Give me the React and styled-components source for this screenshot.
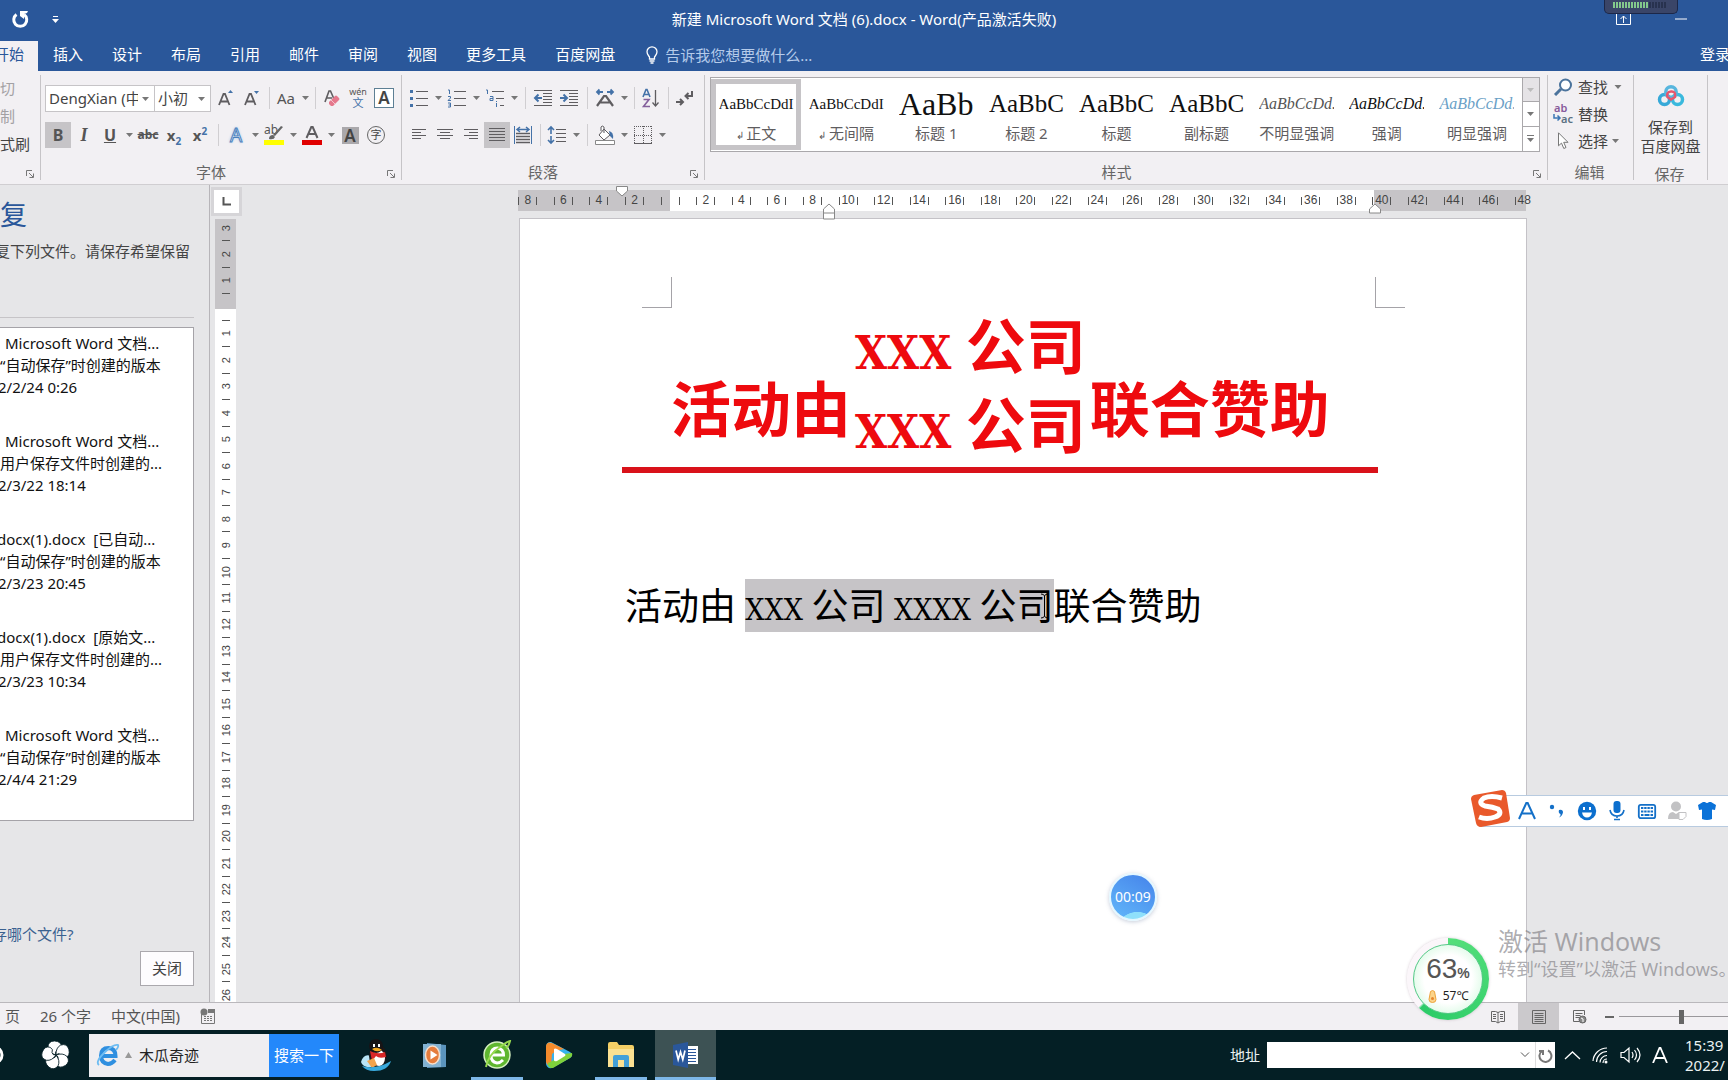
import React, { useState } from 'react';
import styled, { createGlobalStyle, css } from 'styled-components';

const GlobalStyle = createGlobalStyle`
  * {
    box-sizing: border-box;
  }
  body {
    margin: 0;
    overflow: hidden;
    font-family: 'Noto Sans', 'Noto Sans CJK SC', sans-serif;
    font-size: 15px;
    line-height: 22px;
    color: #444;
  }
  button, input, select {
    margin: 0;
    padding: 0;
    border: 0;
    background: none;
    color: inherit;
    font: inherit;
  }
  h1, h2, p, ul {
    margin: 0;
    padding: 0;
    font-weight: 400;
    list-style: none;
  }
  svg {
    display: block;
    flex: none;
  }
`;

const blue = '#2a579a';
const ribbonGray = '#f2f0f3';
const bodyGray = '#e6e6e8';
const markGray = '#c6c4c7';
const iconGray = '#5f5d60';
const iconBlue = '#4472a8';

/* ---------- shell ---------- */

const Shell = styled.div`
  position: relative;
  display: flex;
  flex-direction: column;
  width: 100%;
  height: 100vh;
  overflow: hidden;
  background: ${bodyGray};
`;

const Header = styled.header`
  flex: none;
  background: ${blue};
  color: #fff;
`;

const TitleBar = styled.div`
  display: grid;
  grid-template-columns: 1fr auto 1fr;
  align-items: center;
  height: 41px;
  padding: 0 11px 3px;
`;

const TitleTools = styled.div`
  display: flex;
  align-items: center;
  justify-content: ${({ $end }) => ($end ? 'flex-end' : 'flex-start')};
  gap: ${({ $end }) => ($end ? '44px' : '23px')};
  padding-right: ${({ $end }) => ($end ? '30px' : '0')};
`;

const PlainButton = styled.button`
  display: flex;
  align-items: center;
  justify-content: center;
`;

const Title = styled.h1`
  font-size: 15px;
`;

const Tabs = styled.nav`
  display: flex;
  height: 30px;
`;

const Tab = styled.button`
  height: 30px;
  padding: 0 14px 4px 15px;
  white-space: nowrap;
  color: #fff;
  ${({ $active }) =>
    $active &&
    css`
      display: flex;
      align-items: center;
      justify-content: flex-end;
      width: 38px;
      overflow: hidden;
      background: ${ribbonGray};
      color: ${blue};
    `}
`;

const TellMe = styled.label`
  display: flex;
  flex: 1;
  align-items: center;
  gap: 7px;
  padding: 0 0 2px 17px;

  input {
    width: 200px;
    height: 24px;
    color: #fff;
  }
  input::placeholder {
    color: #b5cbea;
    opacity: 1;
  }
`;

const SignIn = styled.a`
  width: 28px;
  overflow: hidden;
  padding-top: 2px;
  color: #fff;
  text-decoration: none;
  white-space: nowrap;
`;

const LevelWidget = styled.div`
  position: absolute;
  top: 0;
  right: 50px;
  display: flex;
  align-items: center;
  gap: 1px;
  width: 74px;
  height: 14px;
  padding: 0 8px 3px;
  border: 1px solid #1c2748;
  border-top: 0;
  border-radius: 0 0 5px 5px;
  background: #3a4568;
`;

const LevelBar = styled.i`
  width: 2px;
  height: 6px;
  background: ${({ $on }) => ($on ? '#83c98c' : '#28324f')};
`;

/* ---------- ribbon ---------- */

const Ribbon = styled.section`
  display: flex;
  flex: none;
  height: 114px;
  padding: 4px 0;
  border-bottom: 1px solid #d0ced1;
  background: ${ribbonGray};
`;

const Group = styled.div`
  display: flex;
  flex: none;
  flex-direction: column;
  gap: 11px;
  width: ${({ $w }) => $w}px;
  padding: 10px 0 0 4px;
  border-right: 1px solid ${markGray};
`;

const GroupFooter = styled.div`
  display: flex;
  align-items: center;
  height: 14px;
  margin: auto 0 1px;
  padding-right: 6px;
  line-height: 14px;
  color: #666;

  span {
    flex: 1;
    text-align: center;
  }
  button {
    width: 18px;
    margin-left: auto;
    padding: 4px 0 0 10px;
  }
`;

const ToolRow = styled.div`
  display: flex;
  align-items: center;
  height: 26px;
`;

const ToolButton = styled.button`
  display: flex;
  flex: none;
  align-items: center;
  height: 26px;
  background: ${({ $active }) => ($active ? markGray : 'none')};
`;

const IconSlot = styled.span`
  display: flex;
  align-items: center;
  justify-content: center;
  width: 26px;
  height: 26px;
`;

const ArrowSlot = styled.span`
  display: flex;
  justify-content: center;
  width: 12px;
`;

const Divider = styled.i`
  display: flex;
  justify-content: center;
  width: ${({ $w = 8 }) => $w}px;
  height: 22px;

  &::before {
    content: '';
    width: 1px;
    background: #d0ced1;
  }
`;

const Combo = styled.label`
  position: relative;
  width: ${({ $w }) => $w}px;
  height: 27px;
  margin-right: ${({ $last }) => ($last ? '2px' : '0')};
  border: 1px solid ${markGray};
  border-left-width: ${({ $last }) => ($last ? '0' : '1px')};
  background: #fff;

  select {
    width: 100%;
    height: 25px;
    padding: 0 16px 0 3px;
    appearance: none;
  }
  svg {
    position: absolute;
    top: 11px;
    right: 5px;
  }
`;

const Glyph = styled.b`
  font-family: ${({ $serif }) =>
    $serif ? "'Liberation Serif', serif" : "'Noto Sans', sans-serif"};
  font-size: ${({ $size = 16 }) => $size}px;
  font-style: ${({ $italic }) => ($italic ? 'italic' : 'normal')};
  font-weight: ${({ $light }) => ($light ? 400 : 700)};
  line-height: 18px;
  text-decoration: ${({ $line = 'none' }) => $line};
  color: #555;

  sub, sup {
    font-size: 10px;
    line-height: 0;
    color: ${iconBlue};
  }
`;

const ClipItem = styled.button`
  display: block;
  height: 18px;
  text-align: left;
  line-height: 18px;
  color: ${({ $off }) => ($off ? '#a3a1a4' : '#444')};
`;

const ClipGroup = styled(Group)`
  gap: 10px;
  padding: 4px 0 0;
`;

/* ---------- styles gallery ---------- */

const StylesGroup = styled(Group)`
  padding: 2px 0 0 5px;
`;

const Gallery = styled.div`
  display: flex;
  width: 830px;
  height: 75px;
  border: 1px solid #aaa8ab;
  background: #fff;
`;

const StyleItem = styled.button`
  display: flex;
  flex: 1;
  flex-direction: column;
  align-items: center;
  justify-content: space-between;
  height: 71px;
  margin-top: 1px;
  padding: 3px 2px 2px;
  border: 5px solid ${({ $active }) => ($active ? markGray : 'transparent')};
  white-space: nowrap;
  line-height: 20px;
  color: #5f5d60;
`;

const StyleName = styled.span`
  height: 20px;

  small {
    font-size: 10px;
    line-height: 1;
  }
`;

const Preview = styled.span`
  width: 75px;
  height: 36px;
  overflow: hidden;
  text-align: left;
  font-family: 'Liberation Serif', serif;
  font-size: ${({ $size = 15 }) => $size}px;
  font-style: ${({ $italic }) => ($italic ? 'italic' : 'normal')};
  line-height: 34px;
  color: ${({ $color = '#111' }) => $color};
`;

const GalleryScroll = styled.div`
  display: grid;
  grid-template-rows: repeat(3, 1fr);
  width: 17px;
  border-left: 1px solid #aaa8ab;

  button {
    display: flex;
    align-items: center;
    justify-content: center;
    border-bottom: 1px solid #aaa8ab;
  }
  button:first-child {
    background: #e5e3e6;
  }
  button:last-child {
    border-bottom: 0;
  }
`;

const EditItem = styled.button`
  display: flex;
  align-items: center;
  gap: 4px;
  height: 18px;
  line-height: 18px;

  svg:first-child {
    width: 22px;
  }
`;

const EditGroup = styled(Group)`
  gap: 9px;
  padding: 3px 0 0 4px;
`;

const SaveButton = styled.button`
  display: flex;
  flex-direction: column;
  align-items: center;
  gap: 11px;
  margin-right: 4px;
  line-height: 19px;
`;

/* ---------- recovery pane ---------- */

const Body = styled.main`
  display: flex;
  flex: 1;
  min-height: 0;
`;

const Pane = styled.aside`
  display: flex;
  flex: none;
  flex-direction: column;
  width: 210px;
  padding: 14px 15px 16px 0;
  overflow: hidden;
  border-right: 1px solid #b7b5b9;
  white-space: nowrap;
`;

const PaneTitle = styled.h2`
  font-size: 27px;
  line-height: 32px;
  color: ${blue};
`;

const PaneText = styled.p`
  padding: 9px 0 55px;
  border-bottom: 1px solid ${markGray};
  text-indent: -5px;
`;

const FileList = styled.ul`
  height: 494px;
  margin-top: 9px;
  padding-top: 4px;
  overflow: hidden;
  border: 1px solid #a5a3a8;
  border-left: 0;
  background: #fff;
  color: #111;
`;

const FileItem = styled.li`
  height: 98px;

  p {
    white-space: pre;
  }
  p:first-child {
    text-indent: ${({ $cut }) => ($cut ? '-3px' : '5px')};
  }
  p:last-child {
    text-indent: -2px;
  }
`;

const HelpLink = styled.a`
  margin-top: auto;
  text-indent: -8px;
  text-decoration: none;
  color: #3a6190;
`;

const CloseButton = styled.button`
  align-self: flex-end;
  width: 54px;
  height: 35px;
  margin-top: 6px;
  padding-bottom: 2px;
  border: 1px solid #aaa8ad;
  background: #fdfcfe;
`;

/* ---------- rulers ---------- */

const SideRuler = styled.div`
  display: flex;
  flex: none;
  flex-direction: column;
  width: 33px;
  padding: 2px 0 0 1px;
  overflow: hidden;
`;

const TabSelector = styled.button`
  display: flex;
  flex: none;
  align-items: center;
  justify-content: center;
  width: 31px;
  height: 29px;
  border: 3px solid #d6d5d8;
  background: #fff;
`;

const VTrack = styled.div`
  display: grid;
  flex: none;
  grid-template-rows: repeat(30, 1fr);
  width: 21px;
  height: 796px;
  margin: 3px 0 0 4px;
  padding-top: 2px;
  background: linear-gradient(${markGray} 90px, #fff 90px);
`;

const VCell = styled.div`
  display: grid;
  grid-template-rows: 1fr 1fr;
  align-items: center;
  justify-items: center;
  font-family: 'Liberation Sans', sans-serif;
  font-size: 11px;
  line-height: 12px;

  span {
    writing-mode: vertical-rl;
    transform: rotate(180deg);
  }
  i {
    width: 8px;
    height: 1px;
    background: #555;
  }
`;

const Canvas = styled.div`
  display: flex;
  flex: 1;
  flex-direction: column;
  min-width: 0;
  padding: 5px 0 0 275px;
`;

const HTrack = styled.div`
  position: relative;
  flex: none;
  width: 1008px;
  height: 21px;
  background: linear-gradient(
    90deg,
    ${markGray} 152px,
    #fff 152px,
    #fff 856px,
    ${markGray} 856px
  );
`;

const HCells = styled.div`
  display: grid;
  grid-template-columns: repeat(29, 1fr);
  height: 21px;
  margin: 0 -16px 0 -8px;
`;

const HCell = styled.div`
  display: flex;
  align-items: center;
  justify-content: center;
  font-family: 'Liberation Sans', sans-serif;
  font-size: 12px;
  line-height: 21px;

  span {
    display: flex;
    justify-content: center;
    width: 17px;
  }
  &::before,
  &::after {
    content: '';
    width: 1px;
    height: 8px;
    background: #555;
  }
  &:last-child::after {
    background: none;
  }
`;

const Marker = styled.svg`
  position: absolute;
  top: ${({ $top }) => $top}px;
  left: ${({ $left }) => $left}px;
`;

/* ---------- document ---------- */

const Page = styled.article`
  flex: 1;
  width: 1008px;
  min-height: 0;
  margin: 7px 0 0 1px;
  overflow: hidden;
  border: 1px solid #c4c2c7;
  border-bottom: 0;
  background: #fff;
  color: #000;
`;

const Corners = styled.div`
  display: flex;
  justify-content: space-between;
  margin: 58px 121px 0 122px;
`;

const Corner = styled.i`
  width: 30px;
  height: 31px;
  border: solid #a5a3a8;
  border-width: ${({ $right }) => ($right ? '0 0 1px 1px' : '0 1px 1px 0')};
`;

const RedHead = styled.h2`
  display: flex;
  align-items: center;
  gap: 4px;
  margin: -5px 0 0 151px;
  font-family: 'Noto Sans CJK SC', sans-serif;
  font-size: 60px;
  font-weight: 700;
  line-height: 79px;
  white-space: nowrap;
  color: #ee0a0e;
`;

const Side = styled.span`
  padding-top: 46px;
`;

const Pair = styled.span`
  display: flex;
  flex-direction: column;
`;

const Latin = styled.span`
  font-family: 'DejaVu Serif Condensed', 'Liberation Serif', serif;
  font-size: ${({ $size }) => $size}px;
  line-height: 1;
`;

const RedRule = styled.hr`
  height: 6px;
  margin: 6px 148px 0 102px;
  border: 0;
  background: #d9121a;
`;

const Line = styled.p`
  display: flex;
  align-items: flex-start;
  margin: 106px 0 0 105px;
  font-family: 'Liberation Serif', 'Noto Sans CJK SC', serif;
  font-size: 37px;
  line-height: 57px;
  white-space: pre;
`;

const Selection = styled.span`
  position: relative;
  height: 53px;
  background: ${markGray};

  svg {
    position: absolute;
    top: 14px;
    right: 5px;
  }
`;

/* ---------- status bar ---------- */

const StatusBar = styled.footer`
  display: flex;
  flex: none;
  align-items: center;
  height: 28px;
  border-top: 1px solid #bab8bc;
  background: ${ribbonGray};
  color: #555;
`;

const StatusTexts = styled.div`
  display: flex;
  flex: 1;
  align-items: center;
  gap: 20px;
  padding: 0 0 2px 5px;
`;

const StatusIcon = styled.button`
  display: flex;
  align-items: center;
  justify-content: center;
  width: 41px;
  height: 27px;
  background: ${({ $active }) => ($active ? '#cbc9cc' : 'none')};
`;

const ZoomSlider = styled.input`
  width: 109px;
  height: 14px;
  margin-left: 5px;
  appearance: none;
  background: linear-gradient(#9a989c, #9a989c) center / 100% 1px no-repeat;

  &::-webkit-slider-thumb {
    width: 5px;
    height: 14px;
    appearance: none;
    background: #666;
  }
`;

/* ---------- taskbar ---------- */

const Taskbar = styled.nav`
  display: flex;
  flex: none;
  align-items: center;
  height: 50px;
  background: #041f25;
  color: #eaf2f2;
`;

const StartButton = styled.button`
  width: 30px;
  height: 50px;
`;

const TaskSearch = styled.div`
  display: flex;
  align-items: center;
  width: 250px;
  height: 43px;
  margin-right: 10px;
  padding-left: 7px;
  background: #efeef1;
  color: #222;

  input {
    flex: 1;
    min-width: 0;
    margin-left: 7px;
  }
`;

const SearchButton = styled.button`
  width: 70px;
  height: 43px;
  background: #2388fb;
  color: #fff;
`;

const TaskItem = styled.button`
  display: flex;
  align-items: center;
  justify-content: center;
  width: ${({ $wide }) => ($wide ? 61 : 52)}px;
  height: 50px;
  margin-right: ${({ $gap = 10 }) => $gap}px;
  border-top: 3px solid transparent;
  border-bottom: 3px solid ${({ $open }) => ($open ? '#7db7e8' : 'transparent')};
  background: ${({ $active }) => ($active ? '#3d5254' : 'none')};
`;

const Address = styled.label`
  display: flex;
  align-items: center;
  gap: 7px;
  margin-left: auto;
`;

const AddressBox = styled.span`
  display: flex;
  align-items: center;
  width: 288px;
  height: 26px;
  background: #fff;
  color: #444;

  input {
    flex: 1;
    min-width: 0;
  }
`;

const AddressButton = styled.button`
  display: flex;
  align-items: center;
  justify-content: center;
  width: 20px;
  height: 26px;
  border-left: ${({ $line }) => ($line ? '1px solid #ddd' : '0')};
`;

const Tray = styled.div`
  display: flex;
  align-items: center;
  gap: 11px;
  margin: 0 17px 0 9px;
`;

const Clock = styled.time`
  width: 43px;
  overflow: hidden;
  white-space: nowrap;
  line-height: 20px;
`;

/* ---------- floating things ---------- */

const SogouBar = styled.div`
  position: absolute;
  right: 0;
  bottom: 253px;
  display: flex;
  align-items: center;
  width: 249px;
  height: 32px;
  padding-left: 32px;
  border: 1px solid #b8cbe0;
  border-right: 0;
  background: #fff;

  > svg:first-child {
    position: absolute;
    left: -10px;
    bottom: -1px;
  }
  button {
    display: flex;
    justify-content: center;
    width: 30px;
  }
`;

const Watermark = styled.div`
  position: absolute;
  right: 0;
  bottom: 97px;
  width: 230px;
  font-size: 18px;
  line-height: 28px;
  white-space: nowrap;
  color: rgba(120, 118, 124, 0.6);

  strong {
    display: block;
    font-size: 25px;
    font-weight: 400;
  }
`;

const Timer = styled.div`
  position: absolute;
  right: 571px;
  bottom: 159px;
  display: flex;
  align-items: center;
  justify-content: center;
  width: 48px;
  height: 48px;
  border: 2px solid #e4f7ff;
  border-radius: 50%;
  background: radial-gradient(circle at 60% 135%, #8fe0fb 34%, transparent 35%),
    linear-gradient(210deg, #4583ea, #62b8fa);
  box-shadow: 0 1px 4px rgba(90, 110, 150, 0.35);
  font-size: 14px;
  color: #fff;
`;

const Gauge = styled.div`
  position: absolute;
  right: 239px;
  bottom: 60px;
  width: 82px;
  height: 82px;
  padding: 6px;
  border-radius: 50%;
  background: conic-gradient(#55df7b, #2bcb67 62%, #fbf6fa 63%);
  box-shadow: 0 0 3px rgba(120, 80, 110, 0.3);
`;

const GaugeFace = styled.div`
  display: flex;
  flex-direction: column;
  align-items: center;
  height: 70px;
  padding-top: 11px;
  border: 1px solid #55c987;
  border-radius: 50%;
  background: radial-gradient(#fff 50%, #c2f7d2);
  font-size: 12px;
  line-height: 18px;
  color: #222;

  b {
    font-family: 'Liberation Sans', sans-serif;
    font-size: 28px;
    font-weight: 400;
    line-height: 26px;
    color: #555;
  }
  small {
    font-size: 14px;
    font-weight: 700;
  }
  span {
    display: flex;
    align-items: center;
    gap: 6px;
    margin-top: 1px;
  }
`;

/* ---------- icons ---------- */

const Arrow = ({ color = '#777' }) => (
  <svg width="7" height="4" viewBox="0 0 7 4">
    <path d="M0 0h7L3.5 4z" fill={color} />
  </svg>
);

const Icon = ({ w = 20, h = 20, children, ...rest }) => (
  <svg width={w} height={h} viewBox={`0 0 ${w} ${h}`} fill="none" {...rest}>
    {children}
  </svg>
);

const Launcher = () => (
  <PlainButton aria-label="更多选项">
    <Icon w={8} h={8} stroke="#777">
      <path d="M.5 6V.5H6M3 3l4 4M7.500 3.500v4h-4" />
    </Icon>
  </PlainButton>
);

const UndoIcon = () => (
  <Icon w={18} h={18}>
    <path d="M5.500 4.500A6.500 6.500 0 1 0 13 4.500" stroke="#fff" strokeWidth="3" />
    <path d="M9 1h8l-1 2-3 1v5L9 6z" fill="#fff" />
  </Icon>
);

const MoreIcon = () => (
  <Icon w={7} h={7}>
    <path d="M1 .5h5" stroke="#fff" />
    <path d="M0 3h7L3.500 7z" fill="#fff" />
  </Icon>
);

const RibbonIcon = () => (
  <Icon w={15} h={12} stroke="#fff">
    <path d="M.5.5h14v11H.5zM7.500 10V3M4.500 6l3-3 3 3" />
  </Icon>
);

const BulbIcon = () => (
  <Icon w={12} h={18} stroke="#fff" strokeWidth="1.300">
    <path d="M3.500 13v-2C2.500 9.500 1 8.500 1 5.800a5 5 0 0 1 10 0c0 2.700-1.500 3.700-2.500 5.200v2zM3.500 15h5M4.500 17h3" />
  </Icon>
);

const GrowIcon = ({ down }) => (
  <Icon>
    <path d="M3 17 7.500 6h1.500L13.500 17M5 13.500h6.500" stroke={iconGray} strokeWidth="1.800" />
    <path d={down ? 'M12 3h5l-2.500 3z' : 'M12 5h5l-2.500-3z'} fill={iconBlue} />
  </Icon>
);

const EraserIcon = () => (
  <Icon>
    <path d="M3 14 7 3h1.500L12 11M5 10h5" stroke={iconGray} strokeWidth="1.600" />
    <path d="m7 14 6-6q1-1 2 0l2 2q1 1 0 2l-6 6H9l-2-2z" fill="#e5788c" />
    <path d="m9 12 4 4" stroke="#f6c3cc" />
  </Icon>
);

const Phonetic = styled.span`
  display: flex;
  flex-direction: column;
  align-items: center;
  font-size: 9px;
  line-height: 9px;
  color: #555;

  b {
    font-size: 11px;
    font-weight: 400;
    line-height: 13px;
    color: ${iconBlue};
  }
`;

const BoxedA = styled.span`
  width: 20px;
  height: 20px;
  border: 1px solid #5d7f94;
  background: #fff;
  font-size: 17px;
  font-weight: 600;
  line-height: 18px;
`;

const ShadedA = styled.span`
  width: 17px;
  height: 17px;
  background: #aaa8ab;
  font-size: 17px;
  font-weight: 600;
  line-height: 17px;
`;

const CircledChar = styled.span`
  width: 18px;
  height: 18px;
  border: 1px solid #666;
  border-radius: 50%;
  font-size: 11px;
  line-height: 16px;
`;

const GlowA = styled.span`
  font-size: 19px;
  line-height: 20px;
  color: #fff;
  -webkit-text-stroke: 1px #4a80bd;
  text-shadow: 0 0 3px #85b3e4;
`;

const HighlightIcon = () => (
  <Icon w={20} h={22}>
    <text x="0" y="10" fontSize="12" fill="#555">ab</text>
    <path d="m19 3-8 9-2-1 8-9zM5 15q0-4 4-4l2 2q-1 3-6 2z" fill="#666" />
    <path d="M0 16h20v5H0z" fill="#ff0" />
  </Icon>
);

const FontColorIcon = () => (
  <Icon w={20} h={22}>
    <path d="M4.500 14 9.300 3h1.400l4.800 11M6.500 10h7" stroke={iconGray} strokeWidth="2" />
    <path d="M0 16h20v5H0z" fill="#e00000" />
  </Icon>
);

const BulletsIcon = () => (
  <Icon>
    <path d="M7 3.500h12M7 10.500h12M7 17.500h12" stroke={iconGray} />
    <path d="M1 2h3v3H1zM1 9h3v3H1zM1 16h3v3H1z" fill={iconBlue} />
  </Icon>
);

const NumbersIcon = () => (
  <Icon>
    <path d="M7 3.500h12M7 10.500h12M7 17.500h12" stroke={iconGray} />
    <path
      d="M1 2h1.500v4M1 8.500h2.500V10L1 12.500h3M1 15h2.500v4H1M1.500 17h2"
      stroke={iconBlue}
    />
  </Icon>
);

const MultiIcon = () => (
  <Icon>
    <path d="M7 3.500h12M11 10.500h8M15 17.500h4" stroke={iconGray} />
    <path
      d="M1 2h1.500v4M5 8.500h3v4H5v-2h3M11.500 15v4M11.500 13v1"
      stroke={iconBlue}
    />
  </Icon>
);

const IndentIcon = ({ right }) => (
  <Icon>
    <path d="M1 2.500h18M10 5.500h9M10 8.500h9M10 11.500h9M10 14.500h9M1 17.500h18" stroke={iconGray} />
    <path
      d={right ? 'M1 10h7M4.500 6.500 8 10l-3.500 3.500' : 'M9 10H2M5.500 6.500 2 10l3.500 3.500'}
      stroke={iconBlue}
      strokeWidth="2"
    />
  </Icon>
);

const CharScaleIcon = () => (
  <Icon>
    <path d="M2 18 9 8h2l7 10M5 14.500h10" stroke={iconGray} strokeWidth="2.200" />
    <path d="M8 4H2M4.500 1.500 2 4l2.500 2.500M12 4h6M15.500 1.500 18 4l-2.500 2.500" stroke={iconBlue} strokeWidth="1.800" />
  </Icon>
);

const SortIcon = () => (
  <Icon>
    <path d="m2 9 3-7.500h1L9 9M3 6.500h5" stroke={iconBlue} strokeWidth="1.600" />
    <path d="M2.500 11.500H8l-5.500 7H9" stroke="#85609c" strokeWidth="1.600" />
    <path d="M14.500 2v16M11.500 14.500l3 3.500 3-3.500" stroke={iconGray} strokeWidth="1.300" />
  </Icon>
);

const MarksIcon = () => (
  <Icon>
    <path d="M17 3v5h-6M13.500 5 10.500 8l3 3M1 14h7M5 11l3 3-3 3" stroke={iconGray} strokeWidth="2" />
  </Icon>
);

const AlignIcon = ({ type }) => {
  const paths = {
    left: 'M3 4.500h14M3 7.500h9M3 10.500h14M3 13.500h9',
    center: 'M2 4.500h16M5 7.500h10M2 10.500h16M5 13.500h10',
    right: 'M3 4.500h14M8 7.500h9M3 10.500h14M8 13.500h9',
    justify: 'M2 3.500h16M2 6.500h16M2 9.500h16M2 12.500h16M2 15.500h16',
  };
  return (
    <Icon stroke={iconGray}>
      <path d={paths[type]} />
    </Icon>
  );
};

const DistributeIcon = () => (
  <Icon>
    <path d="M3 8.500h14M3 11.500h14M3 14.500h14M3 17.500h14" stroke={iconGray} strokeWidth="1.500" />
    <path d="M1.500 1v18M18.500 1v18" stroke={iconBlue} />
    <path d="M5 4.500h10M7 2 4 4.500 7 7M13 2l3 2.500L13 7" stroke={iconBlue} strokeWidth="1.500" />
  </Icon>
);

const LineSpaceIcon = () => (
  <Icon>
    <path d="M9 4.500h10M9 8.500h10M9 12.500h10M9 16.500h10" stroke={iconGray} />
    <path d="M4 2v7M1 5l3-3 3 3M4 11v7M1 15l3 3 3-3" stroke={iconBlue} strokeWidth="1.600" />
  </Icon>
);

const FillIcon = () => (
  <Icon>
    <path d="m9 4 6 6-6 5-5-5zM9 8V2q-2-2-3 0v4" stroke={iconGray} fill="#fff" />
    <path d="M14 6q5 1 4 8l-3-3z" fill={iconBlue} />
    <path d="M.5 15.500h19v4H.5z" fill="#fff" stroke="#888" />
  </Icon>
);

const BordersIcon = () => (
  <Icon stroke={iconGray} strokeDasharray="1 1">
    <path d="M1 1.500h18M1 10.500h18M1.500 1v18M10.500 1v18M18.500 1v18" />
    <path d="M1 18.500h18" strokeDasharray="none" />
  </Icon>
);

const FindIcon = () => (
  <Icon w={22} h={18} stroke="#4b739c">
    <circle cx="13.500" cy="7" r="5.500" fill="#fff" strokeWidth="2" />
    <path d="m9 11-6 6" strokeWidth="3" />
  </Icon>
);

const ReplaceIcon = () => (
  <svg width="22" height="20" viewBox="0 0 22 20">
    <text x="2" y="8" fontSize="11" fontWeight="600" fill="#875a9b">ab</text>
    <text x="9" y="19" fontSize="11" fontWeight="600" fill="#5b7183">ac</text>
    <path d="M2 10v4h6M5.500 11.500 8 14l-2.500 2.500" fill="none" stroke="#3c76b4" strokeWidth="1.500" />
  </svg>
);

const SelectIcon = () => (
  <Icon w={22} h={18}>
    <path d="M6.500.8v13l3-2.700 2.300 5.400 2.200-1-2.300-5.200H16z" fill="#fff" stroke="#777" />
  </Icon>
);

const CloudIcon = () => (
  <Icon w={28} h={22} strokeWidth="3.500">
    <circle cx="7.500" cy="14.500" r="5" stroke="#37a9d8" />
    <circle cx="20.500" cy="14.500" r="5" stroke="#3ab9dd" />
    <circle cx="14" cy="7" r="5.200" stroke="#58b6de" />
    <path d="M10.500 12q-1.500-5 3.500-5.500t4 5.500l-4 2.500z" stroke="#e5566d" strokeWidth="2.500" />
  </Icon>
);

const BeamIcon = () => (
  <Icon w={9} h={26} stroke="#000">
    <path d="M1 1q3 0 3.500 2Q5 1 8 1M4.500 3v20M1 25q3 0 3.500-2Q5 25 8 25" />
  </Icon>
);

const ProofIcon = () => (
  <Icon w={16} h={16}>
    <path d="M1.500 6v9.500h13V3" stroke="#777" />
    <circle cx="4" cy="4" r="3.500" fill="#777" />
    <path d="M8 1h7v4H8z" fill="#777" />
    <path d="M4 8.500h9M4 10.500h9M4 12.500h9" stroke="#777" strokeDasharray="2 1" />
  </Icon>
);

const ReadIcon = () => (
  <Icon w={14} h={14} stroke="#666">
    <path d="M.5 1.500h4l2.500 1 2.500-1h4v10h-4L7 13l-2.500-1.500h-4zM7 2v11M2 4.500h3M2 6.500h3M2 8.500h3M9 4.500h3M9 6.500h3M9 8.500h3" />
  </Icon>
);

const PrintIcon = () => (
  <Icon w={14} h={14} stroke="#666">
    <path d="M.5.5h13v13H.5zM2.500 3.500h9M2.500 5.500h9M2.500 7.500h9M2.500 9.500h9M2.500 11.500h9" />
  </Icon>
);

const WebIcon = () => (
  <Icon w={14} h={14} stroke="#666">
    <path d="M6 11.500H.5V.5h11V5M2.500 3.500h7M2.500 5.500h5M2.500 7.500h4" />
    <circle cx="9.500" cy="9.500" r="3.500" fill="#888" />
    <path d="m8 8 2 1v3" stroke="#fff" />
  </Icon>
);

/* fat petals wound round the centre, dark seams between them */
const SwirlIcon = () => (
  <Icon w={30} h={30}>
    {[0, 72, 144, 216, 288].map(deg => (
      <path
        key={deg}
        d="M15 15Q8 13 7 7.500 7 1 13.500 1q7 .5 7 6Q20 11 16 10.500q-2.500 1.500-1 4.500z"
        fill="#fff"
        stroke="#041f25"
        strokeWidth=".8"
        transform={`rotate(${deg} 15 15)`}
      />
    ))}
  </Icon>
);

const EdgeIcon = () => (
  <Icon w={24} h={24}>
    <path d="M19 17q-3 4-7 4-7-1-7-8.500T12.500 5q7 .5 7 8H7" stroke="#2f8fe0" strokeWidth="4" />
    <path d="M3 22q-4-3 5-12T22 2q1 2-2 5" stroke="#6dbcf2" strokeWidth="1.800" />
  </Icon>
);

const PenguinIcon = () => (
  <Icon w={32} h={32}>
    <path d="M2 23q3-10 12-5l-2 10q-8 1-10-5z" fill="#b9e4f6" />
    <ellipse cx="19" cy="17" rx="9" ry="11" fill="#1c1719" />
    <ellipse cx="20" cy="19" rx="6" ry="8" fill="#fff" />
    <circle cx="17" cy="7" r="7" fill="#171416" />
    <path d="M14 5h2v3h-2zM19 5h2v3h-2z" fill="#fff" />
    <path d="M13 10q5-3 10 1-6 3-10-1z" fill="#f3a71e" />
    <path d="M11 12q8 4 15 1l1 5q-7 2-10-1l-4 5z" fill="#d92626" />
    <path d="m8 22 7-3 3 7-5 3z" fill="#f2a34b" />
    <path d="M3 27q14 4 29-5-3 10-17 10-8 0-12-5z" fill="#39a9dc" />
  </Icon>
);

const PlayerIcon = () => (
  <Icon w={26} h={26}>
    <path d="m5 1 19 2v22l-19 1z" fill="#5b94bd" />
    <path d="M1 2h18v23H1z" fill="#83b2d2" />
    <ellipse cx="10.500" cy="13" rx="7" ry="9" fill="#e57c3d" stroke="#f7dfcb" strokeWidth="1.500" />
    <path d="m8.500 8.500 7 4.500-7 4.500z" fill="#fff" />
  </Icon>
);

const GreenBrowserIcon = () => (
  <Icon w={30} h={30}>
    <circle cx="15" cy="15" r="13" fill="#5fb62f" stroke="#d5efc0" strokeWidth="1.500" />
    <path d="M21 20q-3 3-6 3-6-1-6-8t6.500-7q6 1 6 7H10" stroke="#fff" strokeWidth="3" />
    <path d="M4 27q2-12 14-20 8-6 10-6-1 5-4 7" stroke="#97d94f" strokeWidth="2" />
  </Icon>
);

const VideoIcon = () => (
  <Icon w={32} h={30}>
    <path d="M3 8Q3 1 8 2l19 10q4 3 0 6L9 28q-5 1-6-4z" fill="#35b2ee" />
    <path d="M3 12V6q1-5 6-3l12 6-8 2-4 3-1 12q-4 0-5-4z" fill="#f58b2c" />
    <path d="M8 28q-4-1-3-5l4-2 12-7 8-1q1 3-2 5L10 28z" fill="#7fd13b" />
    <path d="M11 9q1-1 3 0l8 5q1 1 0 2l-8 5q-3 1-3-1z" fill="#fff" />
  </Icon>
);

const FolderIcon = () => (
  <Icon w={28} h={26}>
    <path d="M1 2q0-2 2-2h7l2 3h13q2 0 2 2v20H1z" fill="#f4cf66" />
    <path d="M1 7h26v18H1z" fill="#fbe192" />
    <path d="M6 25V15q0-2 2-2h12q2 0 2 2v10h-5v-7h-6v7z" fill="#43a0d8" />
  </Icon>
);

const WordIcon = () => (
  <Icon w={26} h={26}>
    <path d="M13 4h12v18H13z" fill="#fff" />
    <path d="M15 7.500h8M15 10.500h8M15 13.500h8M15 16.500h8M15 19.500h8" stroke="#2a579a" />
    <path d="m0 3 15-3v26L0 23z" fill="#2a579a" />
    <path d="m3 8.500 2.200 9L7.500 10l2.300 7.500L12 8.500" stroke="#fff" strokeWidth="1.700" />
  </Icon>
);

const WifiIcon = () => (
  <Icon w={17} h={17} stroke="#fff" strokeWidth="1.200">
    <path d="M1 14A14 14 0 0 1 15 1M4.500 15A10.500 10.500 0 0 1 15 4.500M8 15.500a7 7 0 0 1 7-7M11 16a4 4 0 0 1 4-4" />
    <circle cx="14" cy="15" r="1.500" fill="#fff" stroke="none" />
  </Icon>
);

const SpeakerIcon = () => (
  <Icon w={21} h={18} stroke="#fff" strokeWidth="1.200">
    <path d="M1 6.500h3L9 2v14l-5-4.500H1zM12 6q2 3 0 6M14.500 4q4 5 0 10M17 2q6 7 0 14" />
  </Icon>
);

const SogouLogo = () => (
  <Icon w={40} h={38}>
    <path d="m4 6 28-5q3 0 4 3l4 25q0 3-3 4l-26 5q-4 0-5-4L1 10q0-3 3-4z" fill="#e9592b" />
    <path
      d="M32 9q-11-3-18 0-7 5 1 8 8 1 13 3 5 5-3 8-8 3-16 0"
      stroke="#fff"
      strokeWidth="5"
    />
  </Icon>
);

const sogouBlue = '#1470c8';

const sogouIcons = [
  {
    name: '英文',
    icon: <path d="M2 18 9.300 2h1.400L18 18M5 12.500h10" stroke={sogouBlue} strokeWidth="2" />,
  },
  {
    name: '标点',
    icon: (
      <>
        <circle cx="5" cy="6" r="2.200" fill={sogouBlue} />
        <path d="M12 9q4-1 4 2.500-1 4-4 5 2-2 1.500-3.500Q11 12 12 9z" fill={sogouBlue} />
      </>
    ),
  },
  {
    name: '表情',
    icon: (
      <>
        <circle cx="10" cy="10" r="9.200" fill="#0c6fce" />
        <path d="M6 6h2v3H6zM12 6h2v3h-2zM5 11.500h10q-1 5-5 5t-5-5z" fill="#fff" />
      </>
    ),
  },
  {
    name: '语音',
    icon: (
      <>
        <rect x="6.500" y="0" width="7" height="12" rx="3" fill="#0c6fce" />
        <path d="M3 9q1 6 7 6t7-6M10 15v2M7 18.500h6" stroke={sogouBlue} strokeWidth="1.600" />
      </>
    ),
  },
  {
    name: '键盘',
    icon: (
      <>
        <rect x="1.800" y="3.800" width="16.400" height="13.400" rx="2" fill="#fff" stroke={sogouBlue} strokeWidth="1.800" />
        <path d="M4 7h12M4 10.500h12" stroke={sogouBlue} strokeWidth="2" strokeDasharray="2.400 .8" />
        <path d="M4 14h2.500M7.500 14h5M13.500 14H16" stroke={sogouBlue} strokeWidth="2" />
      </>
    ),
  },
  {
    name: '用户',
    icon: (
      <>
        <circle cx="9" cy="5.500" r="5" fill="#c2c2c4" />
        <path d="M1 18q0-7 5-7l3 2 3-2v7z" fill="#c2c2c4" />
        <path d="M12 11.500h7v4l-3 3h-4z" fill="#fff" stroke="#c2c2c4" />
      </>
    ),
  },
  {
    name: '皮肤',
    icon: <path d="m1 4 5-3h2q2 2 4 0h2l5 3-1 5-3-.500V18q-5 2-10 0V8.500L2 9z" fill="#0b72d8" />,
  },
];

/* ---------- data ---------- */

const tabs = ['插入', '设计', '布局', '引用', '邮件', '审阅', '视图', '更多工具', '百度网盘'];

const styleItems = [
  { name: '正文', sample: 'AaBbCcDdI', mark: true },
  { name: '无间隔', sample: 'AaBbCcDdI', mark: true },
  { name: '标题 1', sample: 'AaBb', size: 32 },
  { name: '标题 2', sample: 'AaBbC', size: 25 },
  { name: '标题', sample: 'AaBbC', size: 25 },
  { name: '副标题', sample: 'AaBbC', size: 25 },
  { name: '不明显强调', sample: 'AaBbCcDd.', italic: true, color: '#555' },
  { name: '强调', sample: 'AaBbCcDd.', italic: true },
  { name: '明显强调', sample: 'AaBbCcDd.', italic: true, color: '#6a9fc6' },
];

const files = [
  { name: 'Microsoft Word 文档...', note: '“自动保存”时创建的版本', date: '2/2/24 0:26' },
  { name: 'Microsoft Word 文档...', note: '用户保存文件时创建的...', date: '2/3/22 18:14' },
  { name: 'docx(1).docx  [已自动...', note: '“自动保存”时创建的版本', date: '2/3/23 20:45', cut: true },
  { name: 'docx(1).docx  [原始文...', note: '用户保存文件时创建的...', date: '2/3/23 10:34', cut: true },
  { name: 'Microsoft Word 文档...', note: '“自动保存”时创建的版本', date: '2/4/4 21:29' },
];

const hNumbers = Array.from({ length: 29 }, (_, i) => Math.abs(i - 4) * 2);
const vNumbers = Array.from({ length: 30 }, (_, i) => Math.abs(i - 3));

/* ---------- parts ---------- */

const Tool = ({ label, active, drop, children }) => (
  <ToolButton $active={active} aria-label={label}>
    <IconSlot>{children}</IconSlot>
    {drop && (
      <ArrowSlot>
        <Arrow />
      </ArrowSlot>
    )}
  </ToolButton>
);

const FontGroup = () => (
  <Group $w={361}>
    <ToolRow>
      <Combo $w={110}>
        <select aria-label="字体">
          <option>DengXian (中文正文)</option>
        </select>
        <Arrow />
      </Combo>
      <Combo $w={56} $last>
        <select aria-label="字号">
          <option>小初</option>
        </select>
        <Arrow />
      </Combo>
      <Tool label="增大字号"><GrowIcon /></Tool>
      <Tool label="减小字号"><GrowIcon down /></Tool>
      <Divider />
      <Tool label="更改大小写" drop><Glyph $size={15} $light>Aa</Glyph></Tool>
      <Divider />
      <Tool label="清除格式"><EraserIcon /></Tool>
      <Tool label="拼音指南"><Phonetic>wén<b>文</b></Phonetic></Tool>
      <Tool label="字符边框"><BoxedA>A</BoxedA></Tool>
    </ToolRow>
    <ToolRow>
      <Tool label="加粗" active><Glyph>B</Glyph></Tool>
      <Tool label="倾斜"><Glyph $serif $italic $size={18}>I</Glyph></Tool>
      <Tool label="下划线" drop><Glyph $line="underline">U</Glyph></Tool>
      <Tool label="删除线"><Glyph $size={12} $line="line-through">abc</Glyph></Tool>
      <Tool label="下标"><Glyph $size={15}>x<sub>2</sub></Glyph></Tool>
      <Tool label="上标"><Glyph $size={15}>x<sup>2</sup></Glyph></Tool>
      <Divider $w={10} />
      <Tool label="文本效果" drop><GlowA>A</GlowA></Tool>
      <Tool label="突出显示" drop><HighlightIcon /></Tool>
      <Tool label="字体颜色" drop><FontColorIcon /></Tool>
      <Tool label="字符底纹"><ShadedA>A</ShadedA></Tool>
      <Tool label="带圈字符"><CircledChar>字</CircledChar></Tool>
    </ToolRow>
    <GroupFooter>
      <span>字体</span>
      <Launcher />
    </GroupFooter>
  </Group>
);

const ParagraphGroup = () => (
  <Group $w={303}>
    <ToolRow>
      <Tool label="项目符号" drop><BulletsIcon /></Tool>
      <Tool label="编号" drop><NumbersIcon /></Tool>
      <Tool label="多级列表" drop><MultiIcon /></Tool>
      <Divider $w={10} />
      <Tool label="减少缩进"><IndentIcon /></Tool>
      <Tool label="增加缩进"><IndentIcon right /></Tool>
      <Divider $w={10} />
      <Tool label="中文版式" drop><CharScaleIcon /></Tool>
      <Divider />
      <Tool label="排序"><SortIcon /></Tool>
      <Divider />
      <Tool label="显示编辑标记"><MarksIcon /></Tool>
    </ToolRow>
    <ToolRow>
      <Tool label="左对齐"><AlignIcon type="left" /></Tool>
      <Tool label="居中"><AlignIcon type="center" /></Tool>
      <Tool label="右对齐"><AlignIcon type="right" /></Tool>
      <Tool label="两端对齐" active><AlignIcon type="justify" /></Tool>
      <Tool label="分散对齐"><DistributeIcon /></Tool>
      <Divider />
      <Tool label="行距" drop><LineSpaceIcon /></Tool>
      <Divider $w={10} />
      <Tool label="底纹" drop><FillIcon /></Tool>
      <Tool label="边框" drop><BordersIcon /></Tool>
    </ToolRow>
    <GroupFooter>
      <span>段落</span>
      <Launcher />
    </GroupFooter>
  </Group>
);

const StyleGallery = () => (
  <StylesGroup $w={843}>
    <Gallery>
      {styleItems.map((item, i) => (
        <StyleItem key={item.name} $active={i === 0}>
          <Preview
            $size={item.italic ? 16 : item.size}
            $italic={item.italic}
            $color={item.color}
          >
            {item.sample}
          </Preview>
          <StyleName>
            {item.mark && <small>↲ </small>}
            {item.name}
          </StyleName>
        </StyleItem>
      ))}
      <GalleryScroll>
        <button aria-label="上一行"><Arrow color="#bbb" /></button>
        <button aria-label="下一行"><Arrow /></button>
        <button aria-label="其他">
          <Icon w={7} h={7}>
            <path d="M0 .5h7" stroke="#777" />
            <path d="M0 3h7L3.500 7z" fill="#777" />
          </Icon>
        </button>
      </GalleryScroll>
    </Gallery>
    <GroupFooter>
      <span>样式</span>
      <Launcher />
    </GroupFooter>
  </StylesGroup>
);

const RecoveryPane = () => (
  <Pane>
    <PaneTitle>复</PaneTitle>
    <PaneText>复下列文件。请保存希望保留</PaneText>
    <FileList>
      {files.map(file => (
        <FileItem key={file.date} $cut={file.cut}>
          <p>{file.name}</p>
          <p>{file.note}</p>
          <p>{file.date}</p>
        </FileItem>
      ))}
    </FileList>
    <HelpLink href="#help">存哪个文件?</HelpLink>
    <CloseButton>关闭</CloseButton>
  </Pane>
);

const Document = () => (
  <Canvas>
    <HTrack>
      <HCells>
        {hNumbers.map((n, i) => (
          <HCell key={i}>
            <span>{n || ''}</span>
          </HCell>
        ))}
      </HCells>
      <Marker $top={-4} $left={98} width="12" height="11" viewBox="0 0 12 11">
        <path d="M.5.500h11V5L6 10 .5 5z" fill="#fff" stroke="#888" />
      </Marker>
      <Marker $top={13} $left={305} width="12" height="17" viewBox="0 0 12 17">
        <path d="M.5 10V6L6 1l5.500 5v4zM.5 10v6h11v-6" fill="#fff" stroke="#888" />
      </Marker>
      <Marker $top={13} $left={851} width="12" height="11" viewBox="0 0 12 11">
        <path d="M.5 10V6L6 1l5.500 5v4z" fill="#fff" stroke="#888" />
      </Marker>
    </HTrack>
    <Page>
      <Corners>
        <Corner />
        <Corner $right />
      </Corners>
      <RedHead>
        <Side>活动由</Side>
        <Pair>
          <span><Latin $size={46}>XXX </Latin>公司</span>
          <span><Latin $size={46}>XXX </Latin>公司</span>
        </Pair>
        <Side>联合赞助</Side>
      </RedHead>
      <RedRule />
      <Line>
        活动由{' '}
        <Selection>
          <Latin $size={30}>XXX </Latin>公司<Latin $size={30}> XXXX </Latin>公司
          <BeamIcon />
        </Selection>
        联合赞助
      </Line>
    </Page>
  </Canvas>
);

const App = () => {
  const [zoom, setZoom] = useState(58);
  const [query, setQuery] = useState('木瓜奇迹');

  return (
    <Shell>
      <GlobalStyle />
      <Header>
        <TitleBar>
          <TitleTools>
            <PlainButton aria-label="重复"><UndoIcon /></PlainButton>
            <PlainButton aria-label="自定义"><MoreIcon /></PlainButton>
          </TitleTools>
          <Title>新建 Microsoft Word 文档 (6).docx - Word(产品激活失败)</Title>
          <TitleTools $end>
            <PlainButton aria-label="功能区"><RibbonIcon /></PlainButton>
            <PlainButton aria-label="最小化">
              <Icon w={12} h={2}><path d="M0 1h12" stroke="#fff" /></Icon>
            </PlainButton>
          </TitleTools>
        </TitleBar>
        <Tabs>
          <Tab $active>开始</Tab>
          {tabs.map(tab => (
            <Tab key={tab}>{tab}</Tab>
          ))}
          <TellMe>
            <BulbIcon />
            <input aria-label="告诉我" placeholder="告诉我您想要做什么..." />
          </TellMe>
          <SignIn href="#login">登录</SignIn>
        </Tabs>
      </Header>
      <LevelWidget>
        {Array.from({ length: 18 }, (_, i) => (
          <LevelBar key={i} $on={i < 12} />
        ))}
      </LevelWidget>

      <Ribbon>
        <ClipGroup $w={41}>
          <ClipItem $off>切</ClipItem>
          <ClipItem $off>制</ClipItem>
          <ClipItem>式刷</ClipItem>
          <GroupFooter>
            <Launcher />
          </GroupFooter>
        </ClipGroup>
        <FontGroup />
        <ParagraphGroup />
        <StyleGallery />
        <EditGroup $w={86}>
          <EditItem><FindIcon />查找<ArrowSlot><Arrow /></ArrowSlot></EditItem>
          <EditItem><ReplaceIcon />替换</EditItem>
          <EditItem><SelectIcon />选择<Arrow /></EditItem>
          <GroupFooter><span>编辑</span></GroupFooter>
        </EditGroup>
        <Group $w={74}>
          <SaveButton>
            <CloudIcon />
            <span>保存到<br />百度网盘</span>
          </SaveButton>
          <GroupFooter><span>保存</span></GroupFooter>
        </Group>
      </Ribbon>

      <Body>
        <RecoveryPane />
        <SideRuler>
          <TabSelector aria-label="制表符">
            <Icon w={9} h={9}><path d="M1.500 0v7.500H9" stroke="#555" strokeWidth="2" /></Icon>
          </TabSelector>
          <VTrack>
            {vNumbers.map((n, i) => (
              <VCell key={i}>
                <span>{n || ''}</span>
                <i />
              </VCell>
            ))}
          </VTrack>
        </SideRuler>
        <Document />
      </Body>

      <StatusBar>
        <StatusTexts>
          <span>页</span>
          <span>26 个字</span>
          <span>中文(中国)</span>
          <ProofIcon />
        </StatusTexts>
        <StatusIcon aria-label="阅读视图"><ReadIcon /></StatusIcon>
        <StatusIcon $active aria-label="页面视图"><PrintIcon /></StatusIcon>
        <StatusIcon aria-label="Web 版式"><WebIcon /></StatusIcon>
        <PlainButton aria-label="缩小">
          <Icon w={14} h={4}><path d="M5 2h9" stroke="#666" strokeWidth="2" /></Icon>
        </PlainButton>
        <ZoomSlider
          type="range"
          aria-label="缩放"
          value={zoom}
          onChange={e => setZoom(e.target.value)}
        />
      </StatusBar>

      <Taskbar>
        <StartButton aria-label="小娜">
          <Icon w={4} h={20}><circle cx="-6" cy="10" r="8" stroke="#fff" strokeWidth="3" /></Icon>
        </StartButton>
        <TaskItem $gap={7} aria-label="浏览器"><SwirlIcon /></TaskItem>
        <TaskSearch>
          <PlainButton aria-label="IE">
            <EdgeIcon />
            <Icon w={12} h={6}><path d="M5 6h7L8.500 0z" fill="#999" /></Icon>
          </PlainButton>
          <input aria-label="搜索" value={query} onChange={e => setQuery(e.target.value)} />
          <SearchButton>搜索一下</SearchButton>
        </TaskSearch>
        <TaskItem $gap={8} aria-label="QQ"><PenguinIcon /></TaskItem>
        <TaskItem aria-label="播放器"><PlayerIcon /></TaskItem>
        <TaskItem $open aria-label="安全浏览器"><GreenBrowserIcon /></TaskItem>
        <TaskItem aria-label="视频"><VideoIcon /></TaskItem>
        <TaskItem $open $gap={8} aria-label="文件夹"><FolderIcon /></TaskItem>
        <TaskItem $open $active $wide aria-label="Word"><WordIcon /></TaskItem>
        <Address>
          地址
          <AddressBox>
            <input aria-label="地址" />
            <AddressButton aria-label="展开">
              <Icon w={10} h={6} stroke="#555"><path d="m1 .500 4 4 4-4" /></Icon>
            </AddressButton>
            <AddressButton $line aria-label="刷新">
              <Icon w={15} h={15} stroke="#777" strokeWidth="2">
                <path d="M10 2.500A6 6 0 1 1 4 3M1 3h4v4" />
              </Icon>
            </AddressButton>
          </AddressBox>
        </Address>
        <Tray>
          <Icon w={17} h={9} stroke="#fff" strokeWidth="1.300"><path d="m1 8 7.500-7L16 8" /></Icon>
          <WifiIcon />
          <SpeakerIcon />
          <Icon w={16} h={16} stroke="#fff" strokeWidth="1.800"><path d="M1 16 7.500 1h1L15 16M3.500 11h9" /></Icon>
        </Tray>
        <Clock>
          15:39
          <br />
          2022/
        </Clock>
      </Taskbar>

      <Watermark>
        <strong>激活 Windows</strong>
        转到“设置”以激活 Windows。
      </Watermark>
      <SogouBar>
        <SogouLogo />
        {sogouIcons.map(({ name, icon }) => (
          <button key={name} aria-label={name}>
            <Icon>{icon}</Icon>
          </button>
        ))}
      </SogouBar>
      <Timer>00:09</Timer>
      <Gauge>
        <GaugeFace>
          <b>63<small>%</small></b>
          <span>
            <Icon w={9} h={13}>
              <path d="M2.500 1.500q2-2 4 0l1.500 8q0 3-3.500 3T1 9.500z" fill="#fbd48a" stroke="#eda33b" />
              <circle cx="4.500" cy="8.500" r="1.500" fill="#e8862c" />
            </Icon>
            57℃
          </span>
        </GaugeFace>
      </Gauge>
    </Shell>
  );
};

export default App;
